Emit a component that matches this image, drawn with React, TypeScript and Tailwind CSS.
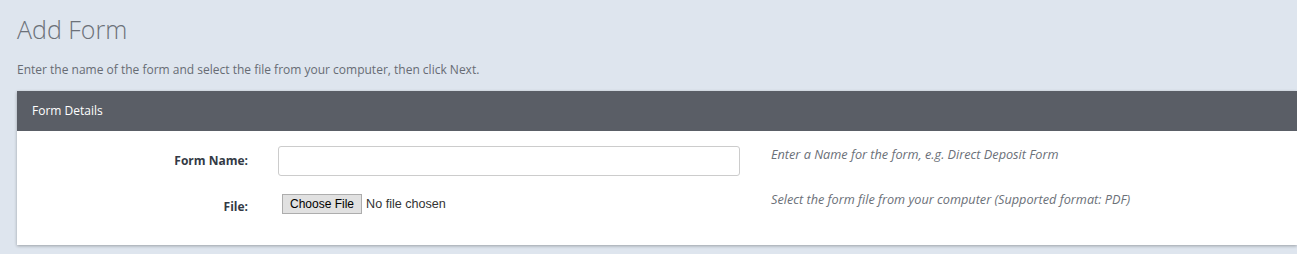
export default function App() {
  return (
    <div className="min-h-[254px] w-full bg-[#dee5ee] pl-[17px] pt-[13px] font-['Open_Sans',sans-serif] overflow-hidden">
      <h1 className="text-[25px] font-light leading-[32px] text-[#6c7179]">Add Form</h1>
      <p className="mt-[17px] text-[12px] leading-[16px] text-[#676c74]">
        Enter the name of the form and select the file from your computer, then click Next.
      </p>
      <div className="mt-[13px] bg-white shadow-[0_1px_3px_rgba(0,0,0,0.3)]">
        <div className="flex h-[40px] items-center bg-[#5a5e66] px-[15px] text-[12px] text-white">
          Form Details
        </div>
        <div className="pt-[15px] pb-[25px]">
          <div className="flex h-[30px] items-center">
            <label className="w-[231px] text-right text-[12px] font-bold text-[#333a45]">Form Name:</label>
            <input
              type="text"
              className="ml-[30px] h-[30px] w-[462px] rounded-[3px] border border-[#cccccc] px-2 text-[12px] outline-none"
            />
            <span className="ml-[31px] -mt-[12px] text-[12.7px] italic text-[#6b7078]">
              Enter a Name for the form, e.g. Direct Deposit Form
            </span>
          </div>
          <div className="mt-[14px] flex h-[30px] items-start">
            <label className="w-[231px] pt-[8px] text-right text-[12px] font-bold text-[#333a45]">File:</label>
            <div className="ml-[34px] w-[458px]">
              <input
                type="file"
                className="font-['Liberation_Sans',sans-serif] text-[12.6px] text-[#333] file:mr-[4px] file:h-[20px] file:border file:border-[#adadad] file:bg-[#e1e1e1] file:px-[7px] file:text-[12px] file:text-black"
              />
            </div>
            <span className="ml-[31px] text-[12.7px] italic text-[#6b7078]">
              Select the form file from your computer (Supported format: PDF)
            </span>
          </div>
        </div>
      </div>
    </div>
  );
}
